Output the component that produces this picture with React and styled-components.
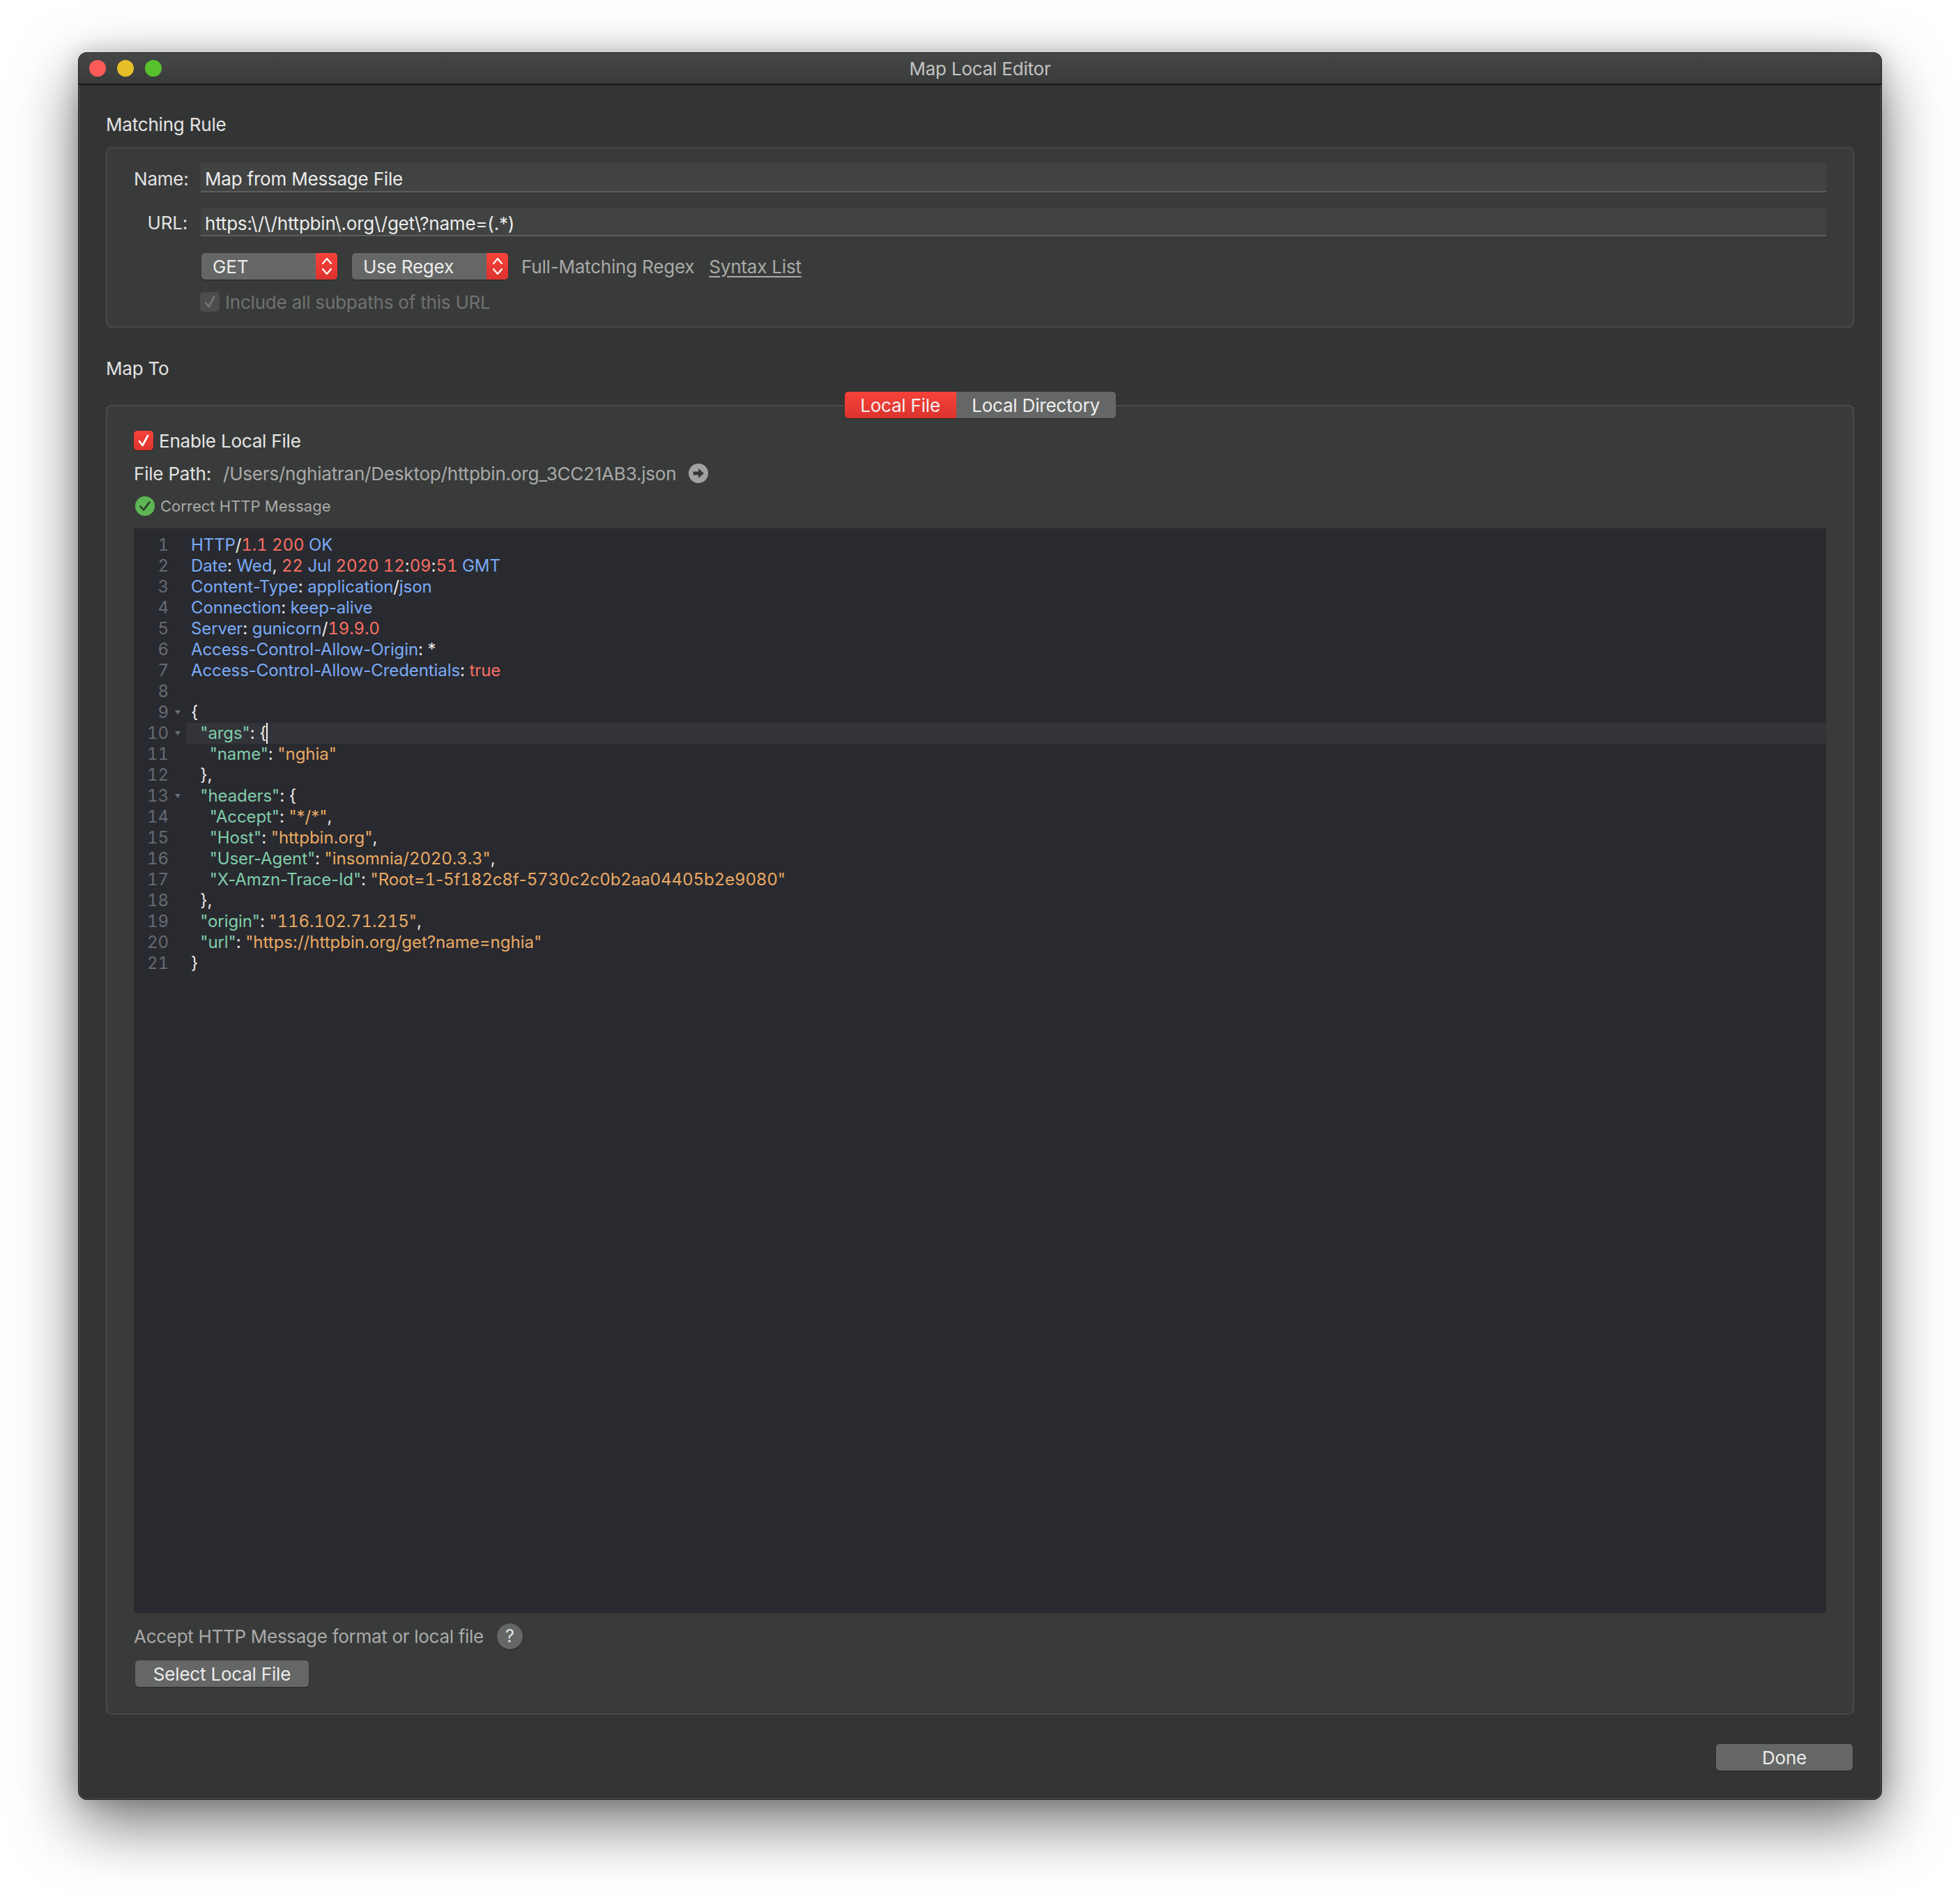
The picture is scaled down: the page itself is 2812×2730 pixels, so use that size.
import React from "react";
import styled, { createGlobalStyle, css } from "styled-components";

const GlobalStyle = createGlobalStyle`
    html, body {
        margin: 0;
        padding: 0;
        background: #fff;
    }
    body {
        font-family: Inter, "Liberation Sans", sans-serif;
        -webkit-font-smoothing: antialiased;
    }
`;

const uiText = css`
    font-size: 26px;
    letter-spacing: -0.2px;
`;

const Page = styled.div`
    width: 2812px;
    height: 2730px;
    padding: 75px 0 0 112px;
    box-sizing: border-box;
    overflow: hidden;
    background: #fff;
`;

const Window = styled.div`
    width: 2588px;
    height: 2507px;
    box-sizing: border-box;
    display: flex;
    flex-direction: column;
    border-radius: 12px;
    background: #333534;
    border: 1px solid #1c1c1c;
    box-shadow: inset 0 0 0 1px #4f5150, 0 34px 90px rgba(0, 0, 0, 0.55), 0 0 30px rgba(0, 0, 0, 0.18);
    overflow: hidden;
`;

const TitleBar = styled.div`
    height: 44px;
    flex: none;
    display: grid;
    grid-template-columns: 1fr auto 1fr;
    align-items: center;
    padding: 0 15px;
    background: linear-gradient(#454746, #3a3c3b);
    border-bottom: 2px solid #151515;
`;

const Dots = styled.div`
    display: flex;
    gap: 16px;
`;

const Dot = styled.span`
    width: 24px;
    height: 24px;
    border-radius: 50%;
    background: ${(p) => p.$color};
`;

const WindowTitle = styled.div`
    ${uiText}
    color: #c2c3c2;
`;

const Content = styled.div`
    flex: 1;
    display: flex;
    flex-direction: column;
    padding: 0 39px;
`;

const SectionTitle = styled.div`
    ${uiText}
    height: 30px;
    line-height: 30px;
    color: #e4e4e4;
    margin-top: ${(p) => p.$top}px;
    margin-bottom: ${(p) => p.$bottom}px;
`;

const GroupBox = styled.div`
    box-sizing: border-box;
    height: ${(p) => p.$height}px;
    display: flex;
    flex-direction: column;
    border: 2px solid #484a49;
    border-radius: 8px;
    background: #393b3a;
    padding: ${(p) => (p.$tabbed ? "0 38px" : "21px 38px 0")};
`;

const FormRow = styled.div`
    display: flex;
    align-items: center;
    height: ${(p) => p.$height}px;
    margin-top: ${(p) => p.$top || 0}px;
    margin-bottom: ${(p) => p.$gap || 0}px;
`;

const FieldLabel = styled.div`
    ${uiText}
    width: 77px;
    text-align: right;
    color: #e2e2e2;
    margin-right: 19px;
    padding-top: 2px;
`;

const TextField = styled.div`
    ${uiText}
    flex: 1;
    height: 100%;
    box-sizing: border-box;
    display: flex;
    align-items: center;
    padding: 5px 0 0 6px;
    background: #414342;
    border-bottom: 2px solid #5c5e5d;
    color: #ececec;
`;

const Select = styled.div`
    ${uiText}
    box-sizing: border-box;
    width: ${(p) => p.$width}px;
    height: 38px;
    display: flex;
    align-items: center;
    justify-content: space-between;
    margin-left: ${(p) => p.$left || 0}px;
    padding-left: 16px;
    border-radius: 5px;
    background: #656766;
    box-shadow: 0 1px 2px rgba(0, 0, 0, 0.35);
    overflow: hidden;
    color: #ececec;
`;

const Stepper = styled.span`
    width: 31px;
    height: 100%;
    display: flex;
    align-items: center;
    justify-content: center;
    background: linear-gradient(#f7433a, #dc332e);
`;

const Hint = styled.span`
    font-size: ${(p) => p.$size || 26}px;
    letter-spacing: ${(p) => p.$spacing ?? -0.2}px;
    color: ${(p) => p.$color || "#a9aaa9"};
    margin-left: ${(p) => p.$left || 0}px;
`;

const LinkText = styled(Hint)`
    text-decoration: underline;
    text-underline-offset: 4px;
`;

const CheckBox = styled.span`
    width: 28px;
    height: 28px;
    flex: none;
    display: flex;
    align-items: center;
    justify-content: center;
    margin-left: ${(p) => p.$left || 0}px;
    border-radius: 5px;
    background: ${(p) => (p.$on ? "linear-gradient(#f7433a, #dc332e)" : "#4c4e4d")};
    box-shadow: ${(p) => (p.$on ? "0 1px 2px rgba(0, 0, 0, 0.4)" : "none")};
`;

const Tabs = styled.div`
    align-self: center;
    display: flex;
    height: 38px;
    margin-top: -21px;
    margin-bottom: 18px;
    border-radius: 5px;
    overflow: hidden;
    box-shadow: 0 1px 2px rgba(0, 0, 0, 0.35);
`;

const Tab = styled.div`
    ${uiText}
    box-sizing: border-box;
    width: ${(p) => p.$width}px;
    display: flex;
    align-items: center;
    justify-content: center;
    background: ${(p) => (p.$active ? "linear-gradient(#f7433a, #dc332e)" : "#656766")};
    color: #f0f0f0;
`;

const StatusIcon = styled.span`
    width: 28px;
    height: 28px;
    flex: none;
    margin-left: 2px;
    display: flex;
`;

const ArrowSvg = styled.svg`
    margin-left: 18px;
`;

const Editor = styled.div`
    flex: none;
    height: 1556px;
    box-sizing: border-box;
    padding-top: 9px;
    margin-top: 18px;
    background: #292a2f;
    font-size: 24px;
    letter-spacing: -0.09px;
`;

const CodeLine = styled.div`
    display: flex;
    height: 30px;
    line-height: 30px;
`;

const LineNumber = styled.span`
    width: 50px;
    flex: none;
    text-align: right;
    font-variant-numeric: tabular-nums;
    color: #666a75;
`;

const FoldCell = styled.span`
    width: 25px;
    flex: none;
    display: flex;
    align-items: center;
    justify-content: center;
`;

const FoldMark = styled.span`
    width: 0;
    height: 0;
    border-left: 4px solid transparent;
    border-right: 4px solid transparent;
    border-top: 6px solid #6a6e78;
`;

const CodeText = styled.span`
    flex: 1;
    padding-left: 7px;
    white-space: pre;
    color: #e8e8e8;
    background: ${(p) => (p.$active ? "#33343a" : "transparent")};
`;

// b: header words, r: numbers, g: json keys, o: json strings with digits, p: json strings without
const tokenColors = {
    b: "#7aaaf8",
    r: "#fa6f64",
    g: "#80cdab",
    o: "#eaa964",
    p: "#eaa964",
    w: "#ececec",
};

const Token = styled.span`
    color: ${(p) => tokenColors[p.$kind]};
    font-variant-numeric: ${(p) => (p.$kind === "r" || p.$kind === "o" ? "tabular-nums" : "normal")};
    letter-spacing: ${(p) => (p.$kind === "p" ? "0" : "inherit")};
`;

const Caret = styled.span`
    display: inline-block;
    width: 2px;
    height: 30px;
    vertical-align: top;
    background: #f2f2f2;
`;

const BottomRow = styled.div`
    display: flex;
    align-items: center;
    height: 38px;
    margin-top: 14px;
`;

const HelpButton = styled.span`
    width: 37px;
    height: 37px;
    display: flex;
    align-items: center;
    justify-content: center;
    margin-left: 19px;
    border-radius: 50%;
    background: #656766;
    box-shadow: 0 1px 2px rgba(0, 0, 0, 0.35);
    font-size: 25px;
    color: #e6e6e6;
`;

const Button = styled.div`
    ${uiText}
    box-sizing: border-box;
    width: ${(p) => p.$width}px;
    height: 38px;
    display: flex;
    align-items: center;
    justify-content: center;
    margin-left: ${(p) => p.$left || 0}px;
    border-radius: 5px;
    background: #656766;
    box-shadow: 0 1px 2px rgba(0, 0, 0, 0.35);
    color: #ececec;
`;

const Footer = styled.div`
    display: flex;
    justify-content: flex-end;
    margin-top: 42px;
    padding-right: 2px;
`;

const code = [
    [["b", "HTTP"], ["w", "/"], ["r", "1.1 200"], ["w", " "], ["b", "OK"]],
    [["b", "Date"], ["w", ": "], ["b", "Wed"], ["w", ", "], ["r", "22"], ["w", " "], ["b", "Jul"], ["w", " "], ["r", "2020 12"], ["w", ":"], ["r", "09"], ["w", ":"], ["r", "51"], ["w", " "], ["b", "GMT"]],
    [["b", "Content-Type"], ["w", ": "], ["b", "application"], ["w", "/"], ["b", "json"]],
    [["b", "Connection"], ["w", ": "], ["b", "keep-alive"]],
    [["b", "Server"], ["w", ": "], ["b", "gunicorn"], ["w", "/"], ["r", "19.9.0"]],
    [["b", "Access-Control-Allow-Origin"], ["w", ": *"]],
    [["b", "Access-Control-Allow-Credentials"], ["w", ": "], ["r", "true"]],
    [],
    [["w", "{"]],
    [["w", "  "], ["g", '"args"'], ["w", ": {"]],
    [["w", "    "], ["g", '"name"'], ["w", ": "], ["p", '"nghia"']],
    [["w", "  },"]],
    [["w", "  "], ["g", '"headers"'], ["w", ": {"]],
    [["w", "    "], ["g", '"Accept"'], ["w", ": "], ["p", '"*/*"'], ["w", ","]],
    [["w", "    "], ["g", '"Host"'], ["w", ": "], ["p", '"httpbin.org"'], ["w", ","]],
    [["w", "    "], ["g", '"User-Agent"'], ["w", ": "], ["p", '"insomnia/'], ["o", "2020.3.3"], ["p", '"'], ["w", ","]],
    [["w", "    "], ["g", '"X-Amzn-Trace-Id"'], ["w", ": "], ["o", '"Root=1'], ["p", "-"], ["o", "5f182c8f"], ["p", "-"], ["o", '5730c2c0b2aa04405b2e9080"']],
    [["w", "  },"]],
    [["w", "  "], ["g", '"origin"'], ["w", ": "], ["o", '"116.102.71.215"'], ["w", ","]],
    [["w", "  "], ["g", '"url"'], ["w", ": "], ["p", '"https://httpbin.org/get?name=nghia"']],
    [["w", "}"]],
];

const foldable = [9, 10, 13];

function Chevrons() {
    return (
        <svg width="16" height="28" viewBox="0 0 16 28" fill="none" stroke="#fff" strokeWidth="2.2" strokeLinecap="round" strokeLinejoin="round">
            <path d="M2 10 L8 3 L14 10" />
            <path d="M2 18 L8 25 L14 18" />
        </svg>
    );
}

function Tick({ color }) {
    return (
        <svg width="20" height="22" viewBox="0 0 20 22" fill="none" stroke={color} strokeWidth="2.8" strokeLinecap="round" strokeLinejoin="round">
            <path d="M4 12 L8.5 18 L16 4" />
        </svg>
    );
}

function ArrowCircle() {
    return (
        <ArrowSvg width="28" height="28" viewBox="0 0 28 28">
            <circle cx="14" cy="14" r="14" fill="#a0a1a0" />
            <path d="M6.5 11.5 H14 V7 L22 14 L14 21 V16.5 H6.5 Z" fill="#363837" />
        </ArrowSvg>
    );
}

function GreenCheck() {
    return (
        <svg width="28" height="28" viewBox="0 0 28 28">
            <circle cx="14" cy="14" r="14" fill="#5cb651" />
            <path d="M7.5 14.5 L12 19.5 L20.5 8.5" fill="none" stroke="#2c3a2c" strokeWidth="2.6" strokeLinecap="round" strokeLinejoin="round" />
        </svg>
    );
}

export default function App() {
    return (
        <Page>
            <GlobalStyle />
            <Window>
                <TitleBar>
                    <Dots>
                        <Dot $color="#fc5b57" />
                        <Dot $color="#e5bf29" />
                        <Dot $color="#57c22c" />
                    </Dots>
                    <WindowTitle>Map Local Editor</WindowTitle>
                </TitleBar>
                <Content>
                    <SectionTitle $top={42} $bottom={17}>Matching Rule</SectionTitle>
                    <GroupBox $height={259}>
                        <FormRow $height={42} $gap={22}>
                            <FieldLabel>Name:</FieldLabel>
                            <TextField>Map from Message File</TextField>
                        </FormRow>
                        <FormRow $height={41} $gap={24}>
                            <FieldLabel>URL:</FieldLabel>
                            <TextField>https:\/\/httpbin\.org\/get\?name=(.*)</TextField>
                        </FormRow>
                        <FormRow $height={38} $gap={18}>
                            <Select $width={195} $left={97}>
                                GET
                                <Stepper><Chevrons /></Stepper>
                            </Select>
                            <Select $width={224} $left={21}>
                                Use Regex
                                <Stepper><Chevrons /></Stepper>
                            </Select>
                            <Hint $left={19}>Full-Matching Regex</Hint>
                            <LinkText $left={21}>Syntax List</LinkText>
                        </FormRow>
                        <FormRow $height={28}>
                            <CheckBox $left={95}><Tick color="#737574" /></CheckBox>
                            <Hint $left={8} $color="#707271">Include all subpaths of this URL</Hint>
                        </FormRow>
                    </GroupBox>

                    <SectionTitle $top={44} $bottom={37}>Map To</SectionTitle>
                    <GroupBox $height={1879} $tabbed>
                        <Tabs>
                            <Tab $active $width={160}>Local File</Tab>
                            <Tab $width={229}>Local Directory</Tab>
                        </Tabs>
                        <FormRow $height={28} $gap={19}>
                            <CheckBox $on><Tick color="#fff" /></CheckBox>
                            <Hint $left={8} $color="#e6e6e6">Enable Local File</Hint>
                        </FormRow>
                        <FormRow $height={28} $gap={19}>
                            <Hint $color="#e2e2e2">File Path:</Hint>
                            <Hint $left={17}>/Users/nghiatran/Desktop/httpbin.org_3CC21AB3.json</Hint>
                            <ArrowCircle />
                        </FormRow>
                        <FormRow $height={28}>
                            <StatusIcon><GreenCheck /></StatusIcon>
                            <Hint $left={8} $size={22} $spacing={0.02}>Correct HTTP Message</Hint>
                        </FormRow>
                        <Editor>
                            {code.map((tokens, i) => (
                                <CodeLine key={i}>
                                    <LineNumber>{i + 1}</LineNumber>
                                    <FoldCell>{foldable.includes(i + 1) && <FoldMark />}</FoldCell>
                                    <CodeText $active={i === 9}>
                                        {tokens.map(([kind, text], j) => (
                                            <Token key={j} $kind={kind}>{text}</Token>
                                        ))}
                                        {i === 9 && <Caret />}
                                    </CodeText>
                                </CodeLine>
                            ))}
                        </Editor>
                        <BottomRow>
                            <Hint $spacing={-0.29}>Accept HTTP Message format or local file</Hint>
                            <HelpButton>?</HelpButton>
                        </BottomRow>
                        <FormRow $height={38} $top={16}>
                            <Button $width={249} $left={2}>Select Local File</Button>
                        </FormRow>
                    </GroupBox>
                    <Footer>
                        <Button $width={196}>Done</Button>
                    </Footer>
                </Content>
            </Window>
        </Page>
    );
}
